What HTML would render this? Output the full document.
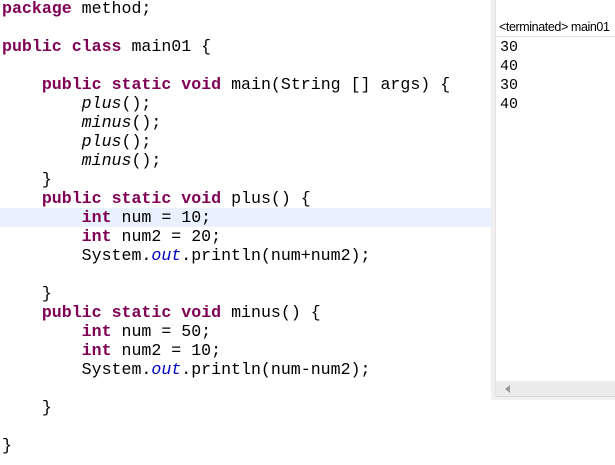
<!DOCTYPE html>
<html><head><style>
html,body{margin:0;padding:0;width:615px;height:465px;overflow:hidden;background:#fff;}
.code{position:absolute;left:2px;top:0;font-family:"Liberation Mono",monospace;font-size:16.6px;line-height:19px;color:#000;white-space:pre;}
.l{height:19px;position:relative;top:-1px}
.k{color:#7f0055;font-weight:bold}
.i{font-style:italic}
.o{font-style:italic;color:#0000c0}
.hl{position:absolute;left:0;top:208px;width:491px;height:19px;background:#e8f2fe}
.con{position:absolute;left:491px;top:0;width:124px;height:400px;background:#f0f0f0}
.cin{position:absolute;left:4px;top:0;width:120px;height:396px;background:#fff;border-left:1px solid #e4e4e4}
.hdr{position:absolute;left:3px;top:20px;font-family:"Liberation Sans",sans-serif;font-size:12.5px;color:#000;white-space:nowrap;letter-spacing:-0.4px}
.hline{position:absolute;left:0;top:36px;width:120px;height:1px;background:#e0e0e0}
.out{position:absolute;left:4px;top:38px;font-family:"Liberation Mono",monospace;font-size:15px;line-height:19px;color:#000;white-space:pre}
.sb{position:absolute;left:0;top:381px;width:120px;height:15px;background:#ececec;border-bottom:1px solid #d8d8d8}
.arr{position:absolute;left:9px;top:385px;width:0;height:0;border-top:4px solid transparent;border-bottom:4px solid transparent;border-right:5px solid #999}
</style></head><body>
<div class="hl"></div>
<div class="code"><div class="l"><span class="k">package</span> method;</div><div class="l"></div><div class="l"><span class="k">public</span> <span class="k">class</span> main01 {</div><div class="l"></div><div class="l">    <span class="k">public</span> <span class="k">static</span> <span class="k">void</span> main(String [] args) {</div><div class="l">        <span class="i">plus</span>();</div><div class="l">        <span class="i">minus</span>();</div><div class="l">        <span class="i">plus</span>();</div><div class="l">        <span class="i">minus</span>();</div><div class="l">    }</div><div class="l">    <span class="k">public</span> <span class="k">static</span> <span class="k">void</span> plus() {</div><div class="l">        <span class="k">int</span> num = 10;</div><div class="l">        <span class="k">int</span> num2 = 20;</div><div class="l">        System.<span class="o">out</span>.println(num+num2);</div><div class="l"></div><div class="l">    }</div><div class="l">    <span class="k">public</span> <span class="k">static</span> <span class="k">void</span> minus() {</div><div class="l">        <span class="k">int</span> num = 50;</div><div class="l">        <span class="k">int</span> num2 = 10;</div><div class="l">        System.<span class="o">out</span>.println(num-num2);</div><div class="l"></div><div class="l">    }</div><div class="l"></div><div class="l">}</div></div>
<div class="con"><div class="cin">
<div class="hdr">&lt;terminated&gt; main01</div>
<div class="hline"></div>
<div class="out">30
40
30
40</div>
<div class="sb"></div><div class="arr"></div>
</div></div>
</body></html>
